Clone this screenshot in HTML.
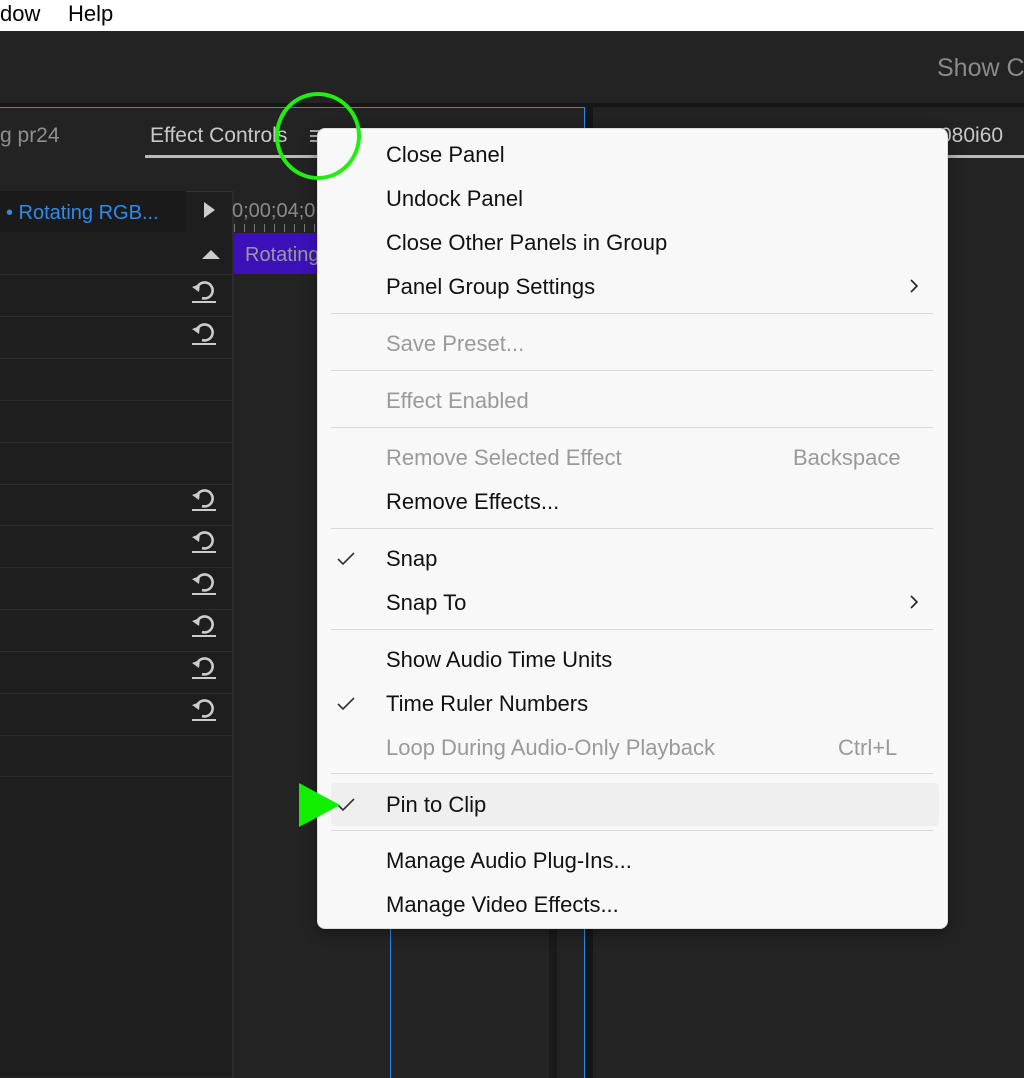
<!DOCTYPE html>
<html><head><meta charset="utf-8"><style>
*{margin:0;padding:0;box-sizing:border-box}
body{width:1024px;height:1078px;background:#232323;position:relative;overflow:hidden;font-family:"Liberation Sans",sans-serif}
.a{position:absolute;white-space:nowrap}
.mt{font-size:22px;color:#000;top:0;line-height:28px}
.mi{position:absolute;left:386px;font-size:22px;color:#111;line-height:30px;white-space:nowrap}
.dis{color:#9a9a9a}
.sep{position:absolute;left:331px;width:602px;height:1px;background:#d8d8d8}
.chk{position:absolute;left:336px;width:20px;height:14px}
.row{position:absolute;left:0;width:233px;height:1px;background:#2c2c2c}
.rst{position:absolute;left:190px;width:26px;height:26px}
</style></head><body>
<div class="a" style="left:0;top:0;width:1024px;height:31px;background:#fff"></div>
<div class="a mt" style="left:0">dow</div>
<div class="a mt" style="left:68px">Help</div>
<div class="a" style="left:937px;top:54px;font-size:25px;color:#8a8a8a">Show C</div>
<div class="a" style="left:0;top:103px;width:1024px;height:975px;background:#161616"></div>
<!-- left panel -->
<div class="a" style="left:0;top:107px;width:585px;height:971px;background:#232323;border:1px solid #2d8ceb;border-left:none;border-bottom:none"></div>
<div class="a" style="left:0;top:124px;font-size:21px;color:#8f8f8f">g pr24</div>
<div class="a" style="left:150px;top:124px;font-size:21px;color:#c8c8c8">Effect Controls</div>
<div class="a" style="left:145px;top:155px;width:180px;height:3px;background:#b8b8b8"></div>
<div class="a" style="left:310px;top:130px;width:10px;height:2px;background:#aaa;box-shadow:0 5px 0 #aaa,0 10px 0 #aaa"></div>
<!-- left column -->
<div class="a" style="left:0;top:191px;width:233px;height:42px;background:#1e1e1e;border-top:1px solid #333"></div>
<div class="a" style="left:0;top:191px;width:186px;height:41px;background:#1a1a1a"></div>
<div class="a" style="left:6px;top:202px;font-size:20px;color:#2d8ceb">• Rotating RGB...</div>
<div class="a" style="left:204px;top:202px;width:0;height:0;border-top:8px solid transparent;border-bottom:8px solid transparent;border-left:11px solid #ccc"></div>
<div class="a" style="left:0;top:233px;width:233px;height:843px;background:#1e1e1e"></div>
<div class="a" style="left:202px;top:250px;width:0;height:0;border-left:9px solid transparent;border-right:9px solid transparent;border-bottom:9px solid #ccc"></div>
<div class="row" style="top:274px"></div><div class="row" style="top:316px"></div><div class="row" style="top:358px"></div><div class="row" style="top:400px"></div><div class="row" style="top:442px"></div><div class="row" style="top:484px"></div><div class="row" style="top:525px"></div><div class="row" style="top:567px"></div><div class="row" style="top:609px"></div><div class="row" style="top:651px"></div><div class="row" style="top:693px"></div><div class="row" style="top:735px"></div><div class="row" style="top:776px"></div>
<div class="a" style="left:232px;top:191px;width:2px;height:887px;background:#2c2c2c"></div>
<!-- reset icons -->
<svg width="0" height="0" style="position:absolute"><defs><symbol id="r" viewBox="0 0 26 26"><path d="M7 10 A8 8 0 1 1 12 20" fill="none" stroke="#ccc" stroke-width="2.6"/><path d="M2 9 L10 6 L9 14 Z" fill="#ccc"/><rect x="2" y="23" width="24" height="2" fill="#ccc"/></symbol></defs></svg>
<svg class="rst" style="top:278px"><use href="#r"/></svg>
<svg class="rst" style="top:320px"><use href="#r"/></svg>
<svg class="rst" style="top:486px"><use href="#r"/></svg>
<svg class="rst" style="top:528px"><use href="#r"/></svg>
<svg class="rst" style="top:570px"><use href="#r"/></svg>
<svg class="rst" style="top:612px"><use href="#r"/></svg>
<svg class="rst" style="top:654px"><use href="#r"/></svg>
<svg class="rst" style="top:696px"><use href="#r"/></svg>
<!-- timeline -->
<div class="a" style="left:232px;top:200px;font-size:20px;color:#8a8a8a">0;00;04;0</div>
<div class="a" style="left:234px;top:224px;width:90px;height:8px;background:repeating-linear-gradient(90deg,#777 0 1px,transparent 1px 10px)"></div>
<div class="a" style="left:234px;top:233px;width:90px;height:41px;background:#3c12b8"></div>
<div class="a" style="left:245px;top:244px;font-size:20px;color:#9a9a9a">Rotating</div>
<div class="a" style="left:390px;top:920px;width:1px;height:158px;background:#2d8ceb"></div>
<div class="a" style="left:549px;top:920px;width:8px;height:158px;background:#1a1a1a"></div>
<!-- right panel -->
<div class="a" style="left:593px;top:107px;width:431px;height:971px;background:#232323"></div>
<div class="a" style="left:940px;top:124px;font-size:21px;color:#c8c8c8">080i60</div>
<div class="a" style="left:940px;top:155px;width:84px;height:3px;background:#b8b8b8"></div>
<!-- menu -->
<div class="a" style="left:317px;top:128px;width:631px;height:801px;background:#f8f8f8;border-radius:8px;border:1px solid #ddd;box-shadow:0 4px 14px rgba(0,0,0,.35)"></div>
<div class="a" style="left:331px;top:783px;width:608px;height:43px;background:#efefef;border-radius:4px"></div>
<div class="mi" style="top:140px">Close Panel</div>
<div class="mi" style="top:184px">Undock Panel</div>
<div class="mi" style="top:228px">Close Other Panels in Group</div>
<div class="mi" style="top:272px">Panel Group Settings</div>
<div class="sep" style="top:313px"></div>
<div class="mi dis" style="top:329px">Save Preset...</div>
<div class="sep" style="top:370px"></div>
<div class="mi dis" style="top:386px">Effect Enabled</div>
<div class="sep" style="top:427px"></div>
<div class="mi dis" style="top:443px">Remove Selected Effect</div>
<div class="mi dis" style="top:443px;left:793px">Backspace</div>
<div class="mi" style="top:487px">Remove Effects...</div>
<div class="sep" style="top:528px"></div>
<div class="mi" style="top:544px">Snap</div>
<div class="mi" style="top:588px">Snap To</div>
<div class="sep" style="top:629px"></div>
<div class="mi" style="top:645px">Show Audio Time Units</div>
<div class="mi" style="top:689px">Time Ruler Numbers</div>
<div class="mi dis" style="top:733px">Loop During Audio-Only Playback</div>
<div class="mi dis" style="top:733px;left:838px">Ctrl+L</div>
<div class="sep" style="top:773px"></div>
<div class="mi" style="top:790px">Pin to Clip</div>
<div class="sep" style="top:830px"></div>
<div class="mi" style="top:846px">Manage Audio Plug-Ins...</div>
<div class="mi" style="top:890px">Manage Video Effects...</div>
<svg class="a" style="left:908px;top:278px" width="12" height="16"><path d="M3 2 L9 8 L3 14" fill="none" stroke="#222" stroke-width="1.6"/></svg>
<svg class="a" style="left:908px;top:594px" width="12" height="16"><path d="M3 2 L9 8 L3 14" fill="none" stroke="#222" stroke-width="1.6"/></svg>
<svg class="chk" style="top:552px"><path d="M2 7 L7 12 L18 1" fill="none" stroke="#333" stroke-width="1.6"/></svg>
<svg class="chk" style="top:697px"><path d="M2 7 L7 12 L18 1" fill="none" stroke="#333" stroke-width="1.6"/></svg>
<svg class="chk" style="top:798px"><path d="M2 7 L7 12 L18 1" fill="none" stroke="#333" stroke-width="1.6"/></svg>
<!-- annotations -->
<svg class="a" style="left:0;top:0" width="1024" height="1078">
<ellipse cx="318" cy="136" rx="41" ry="42" fill="none" stroke="#22ee11" stroke-width="4"/>
<polygon points="299,783 299,827 340,805" fill="#11ee00"/>
</svg>
</body></html>
